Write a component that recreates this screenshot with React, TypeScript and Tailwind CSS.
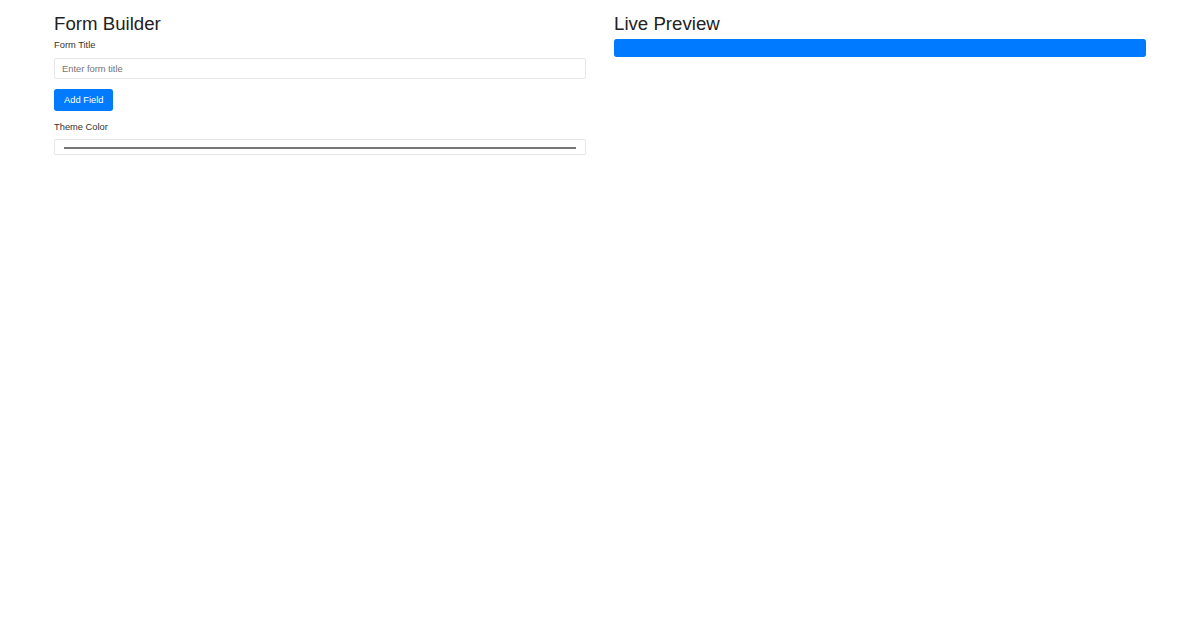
import React, { useState } from 'react';

const font = { fontFamily: '"Liberation Sans", Arial, sans-serif' };

const App: React.FC = () => {
    const [title, setTitle] = useState('');
    const [color, setColor] = useState('#007bff');

    return (
        <div className="min-h-screen w-full bg-white text-[#222] font-['Liberation_Sans',Arial,sans-serif]">
            <div className="mx-auto w-[1092px] pt-[13px] grid grid-cols-2 gap-[28px]">
                {/* builder */}
                <div className="flex flex-col">
                    <h2 className="m-0 text-[18.67px] leading-[1.2] font-normal">Form Builder</h2>
                    <label className="mt-[3px] text-[9.33px] leading-[14px] text-[#333]">Form Title</label>
                    <input
                        type="text"
                        value={title}
                        onChange={e => setTitle(e.target.value)}
                        placeholder="Enter form title"
                        className="mt-[6px] h-[21px] w-full rounded-[2px] border border-[#e6e6e6] px-[7px] text-[9.33px] text-[#495057] placeholder:text-[#757575] outline-none"
                        style={font}
                    />
                    <button
                        className="mt-[10px] self-start h-[22px] px-[10px] rounded-[2.7px] bg-[#007bff] text-white text-[9.33px] leading-none"
                        style={font}
                    >
                        Add Field
                    </button>
                    <label className="mt-[9px] text-[9.33px] leading-[14px] text-[#333]">Theme Color</label>
                    <input
                        type="color"
                        value={color}
                        onChange={e => setColor(e.target.value)}
                        className="mt-[5px] block h-[15.5px] w-full rounded-[2px] border border-[#e6e6e6] bg-white px-[7px] py-[4px]"
                    />
                </div>

                {/* preview */}
                <div className="flex flex-col">
                    <h2 className="m-0 text-[18.67px] leading-[1.2] font-normal">Live Preview</h2>
                    <div className="mt-[4px] h-[18px] w-full rounded-[2.7px]" style={{ backgroundColor: color }} />
                </div>
            </div>
        </div>
    );
};

export default App;
